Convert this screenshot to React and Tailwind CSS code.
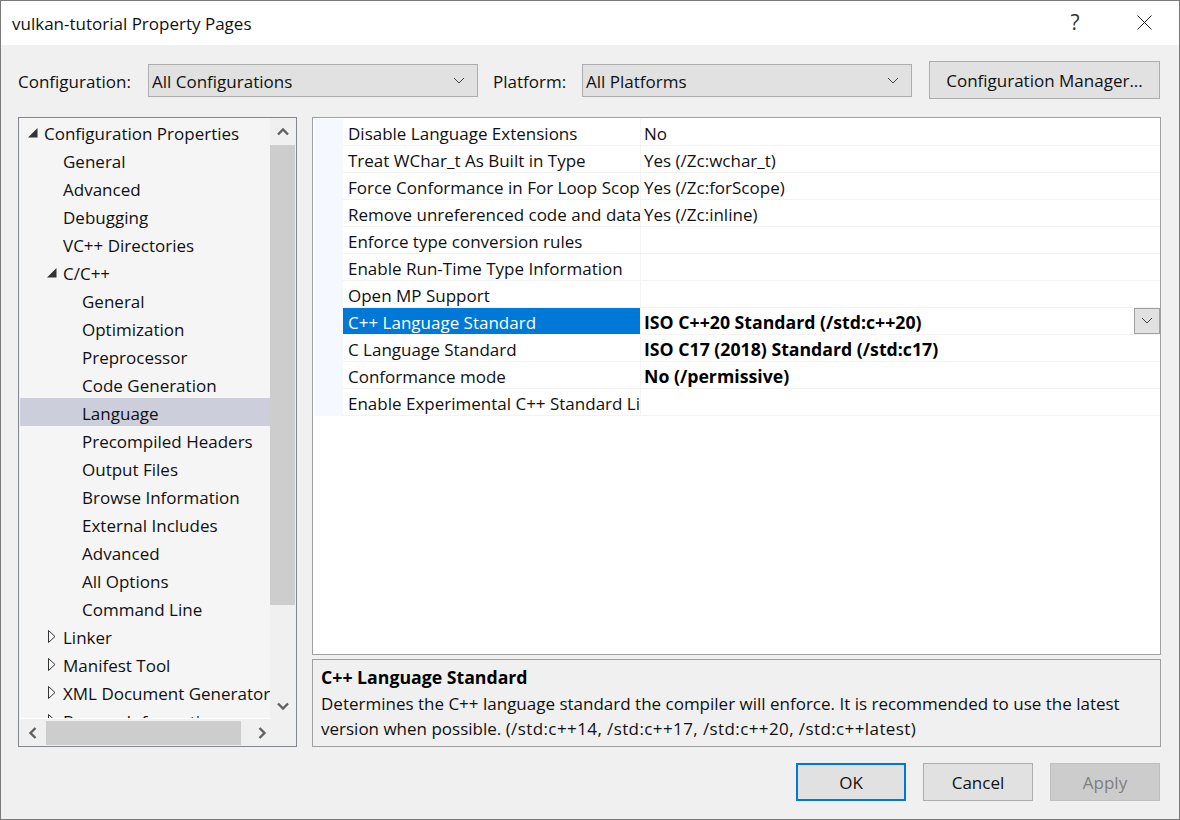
const treeItems = [
  { label: "Configuration Properties", depth: 0, arrow: "open" },
  { label: "General", depth: 1 },
  { label: "Advanced", depth: 1 },
  { label: "Debugging", depth: 1 },
  { label: "VC++ Directories", depth: 1 },
  { label: "C/C++", depth: 1, arrow: "open" },
  { label: "General", depth: 2 },
  { label: "Optimization", depth: 2 },
  { label: "Preprocessor", depth: 2 },
  { label: "Code Generation", depth: 2 },
  { label: "Language", depth: 2, selected: true },
  { label: "Precompiled Headers", depth: 2 },
  { label: "Output Files", depth: 2 },
  { label: "Browse Information", depth: 2 },
  { label: "External Includes", depth: 2 },
  { label: "Advanced", depth: 2 },
  { label: "All Options", depth: 2 },
  { label: "Command Line", depth: 2 },
  { label: "Linker", depth: 1, arrow: "closed" },
  { label: "Manifest Tool", depth: 1, arrow: "closed" },
  { label: "XML Document Generator", depth: 1, arrow: "closed" },
  { label: "Browse Information", depth: 1, arrow: "closed" },
];

const rows = [
  { name: "Disable Language Extensions", value: "No" },
  { name: "Treat WChar_t As Built in Type", value: "Yes (/Zc:wchar_t)" },
  { name: "Force Conformance in For Loop Scope", value: "Yes (/Zc:forScope)" },
  { name: "Remove unreferenced code and data", value: "Yes (/Zc:inline)" },
  { name: "Enforce type conversion rules", value: "" },
  { name: "Enable Run-Time Type Information", value: "" },
  { name: "Open MP Support", value: "" },
  { name: "C++ Language Standard", value: "ISO C++20 Standard (/std:c++20)", bold: true, selected: true },
  { name: "C Language Standard", value: "ISO C17 (2018) Standard (/std:c17)", bold: true },
  { name: "Conformance mode", value: "No (/permissive)", bold: true },
  { name: "Enable Experimental C++ Standard Library", value: "" },
];

function Chevron({ className }) {
  return (
    <svg className={className} width="12" height="8" viewBox="0 0 12 8" fill="none" stroke="#444" strokeWidth="1">
      <path d="M1 1l5 5 5-5" />
    </svg>
  );
}

function ScrollArrow({ d }) {
  return (
    <svg width="12" height="12" viewBox="0 0 12 12" fill="none" stroke="#606060" strokeWidth="2.4">
      <path d={d} />
    </svg>
  );
}

function TreeArrow({ type }) {
  if (type === "open") {
    return (
      <svg width="10" height="10" viewBox="0 0 10 10">
        <path d="M9.5 0V9.5H0z" fill="#333" />
      </svg>
    );
  }
  return (
    <svg width="8" height="13" viewBox="0 0 8 13" fill="none" stroke="#333" strokeWidth="1">
      <path d="M0.5 0.5L7 6.5 0.5 12.5z" />
    </svg>
  );
}

function Select({ label, width }) {
  return (
    <div className={`${width} h-[33px] mt-[1px] flex items-center justify-between bg-[#e1e1e1] border border-[#adadad] pl-[3px] pr-[12px]`}>
      <span className="pt-[2px]">{label}</span>
      <Chevron className="mt-[1px]" />
    </div>
  );
}

function Button({ children, className }) {
  return (
    <div className={`h-[38px] flex items-center justify-center border ${className}`}>
      <span>{children}</span>
    </div>
  );
}

export default function App() {
  return (
    <div className="w-[1180px] h-[820px] flex flex-col overflow-hidden bg-[#f0f0f0] border border-[#7a7a7a] text-[17px] text-[#111] font-['Open_Sans','Noto_Sans',sans-serif] leading-none">
      {/* title bar */}
      <div className="h-[44px] shrink-0 bg-white flex items-center pl-[11px]">
        <span className="flex-1">vulkan-tutorial Property Pages</span>
        <span className="text-[21px] text-[#333] w-[20px] mr-[52px] text-center mb-[2px]">?</span>
        <svg width="15" height="15" viewBox="0 0 15 15" fill="none" stroke="#222" strokeWidth="1" className="mr-[27px] mb-[2px]">
          <path d="M0.5 0.5l14 14M14.5 0.5l-14 14" />
        </svg>
      </div>

      <div className="flex-1 flex flex-col pl-[17px] pr-[18px]">
        {/* config row */}
        <div className="h-[38px] mt-[16px] flex items-center shrink-0">
          <span className="w-[130px] pt-[2px]">Configuration:</span>
          <Select label="All Configurations" width="w-[330px]" />
          <span className="ml-[15px] w-[89px] pt-[2px]">Platform:</span>
          <Select label="All Platforms" width="w-[330px]" />
          <Button className="ml-[17px] w-[231px] bg-[#e1e1e1] border-[#adadad]">Configuration Manager...</Button>
        </div>

        <div className="flex mt-[18px] h-[630px]">
          {/* tree */}
          <div className="w-[279px] shrink-0 border border-[#828790] flex flex-col bg-[#f0f0f0]">
            <div className="flex flex-1 min-h-0">
              <div className="w-[250px] ml-px overflow-hidden bg-[#f5f5f5] border-b border-white">
                {treeItems.map((item, i) => (
                  <div
                    key={i}
                    className={`h-[28px] flex items-center whitespace-nowrap relative ${item.selected ? "bg-[#cccedb]" : ""} ${item.depth === 0 ? "pl-[24px]" : item.depth === 1 ? "pl-[43px]" : "pl-[62px]"}`}
                  >
                    {item.arrow && (
                      <span className={`absolute ${item.arrow === "open" ? "top-[10px]" : "top-[8px]"} ${item.depth === 0 ? "left-[8px]" : item.arrow === "open" ? "left-[27px]" : "left-[28px]"}`}>
                        <TreeArrow type={item.arrow} />
                      </span>
                    )}
                    <span className="pt-[2px]">{item.label}</span>
                  </div>
                ))}
              </div>
              <div className="w-[25px] flex flex-col">
                <div className="h-[27px] flex items-center justify-center shrink-0">
                  <ScrollArrow d="M1 8.5l5-5 5 5" />
                </div>
                <div className="h-[460px] bg-[#cdcdcd] shrink-0" />
                <div className="flex-1 flex items-end justify-center pb-[7px]">
                  <ScrollArrow d="M1 3.5l5 5 5-5" />
                </div>
              </div>
            </div>
            <div className="h-[27px] shrink-0 flex items-center">
              <div className="w-[27px] flex justify-center shrink-0">
                <ScrollArrow d="M8.5 1l-5 5 5 5" />
              </div>
              <div className="w-[195px] h-[24px] bg-[#cdcdcd]" />
              <div className="flex-1 flex justify-center pr-[14px]">
                <ScrollArrow d="M3.5 1l5 5-5 5" />
              </div>
            </div>
          </div>

          {/* property grid + description */}
          <div className="ml-[15px] w-[850px] flex flex-col">
            <div className="h-[538px] border border-[#a0a0a0] bg-white pt-[1px] pl-px">
              <div className="bg-[#f5f8fd] pl-[29px]">
                {rows.map((row, i) => (
                  <div key={i} className="h-[27px] flex bg-white border-b border-[#f3f3f3] whitespace-nowrap">
                    <div className={`w-[297px] pl-[5px] pt-[3px] flex items-center overflow-hidden shrink-0 ${row.selected ? "bg-[#0078d7] text-white" : ""}`}>
                      {row.name}
                    </div>
                    <div className={`flex-1 pl-[3px] pt-[3px] flex items-center border-l border-[#f3f3f3] ${row.bold ? "font-bold text-black text-[17.7px]" : ""}`}>
                      {row.value}
                    </div>
                    {row.selected && (
                      <div className="w-[26px] h-[26px] bg-[#e1e1e1] border border-[#a0a0a0] flex items-center justify-center">
                        <Chevron />
                      </div>
                    )}
                  </div>
                ))}
              </div>
            </div>
            <div className="mt-[4px] h-[88px] border border-[#a0a0a0] bg-[#f0f0f0] pl-[8px] pt-[7px]">
              <div className="font-bold text-black text-[17.7px] leading-[20px]">C++ Language Standard</div>
              <div className="mt-[4px] leading-[25px] w-[830px]">
                Determines the C++ language standard the compiler will enforce. It is recommended to use the latest version when possible. <span className="tracking-[0.4px]">(/std:c++14, /std:c++17, /std:c++20, /std:c++latest)</span>
              </div>
            </div>
          </div>
        </div>

        {/* dialog buttons */}
        <div className="mt-[16px] flex justify-end pr-px">
          <Button className="w-[110px] bg-[#e1e1e1] border-2 border-[#0078d7]">OK</Button>
          <Button className="ml-[17px] w-[110px] bg-[#e1e1e1] border-[#adadad]">Cancel</Button>
          <Button className="ml-[17px] w-[110px] bg-[#cccccc] border-[#bfbfbf] text-[#7f7f7f]">Apply</Button>
        </div>
      </div>
    </div>
  );
}
